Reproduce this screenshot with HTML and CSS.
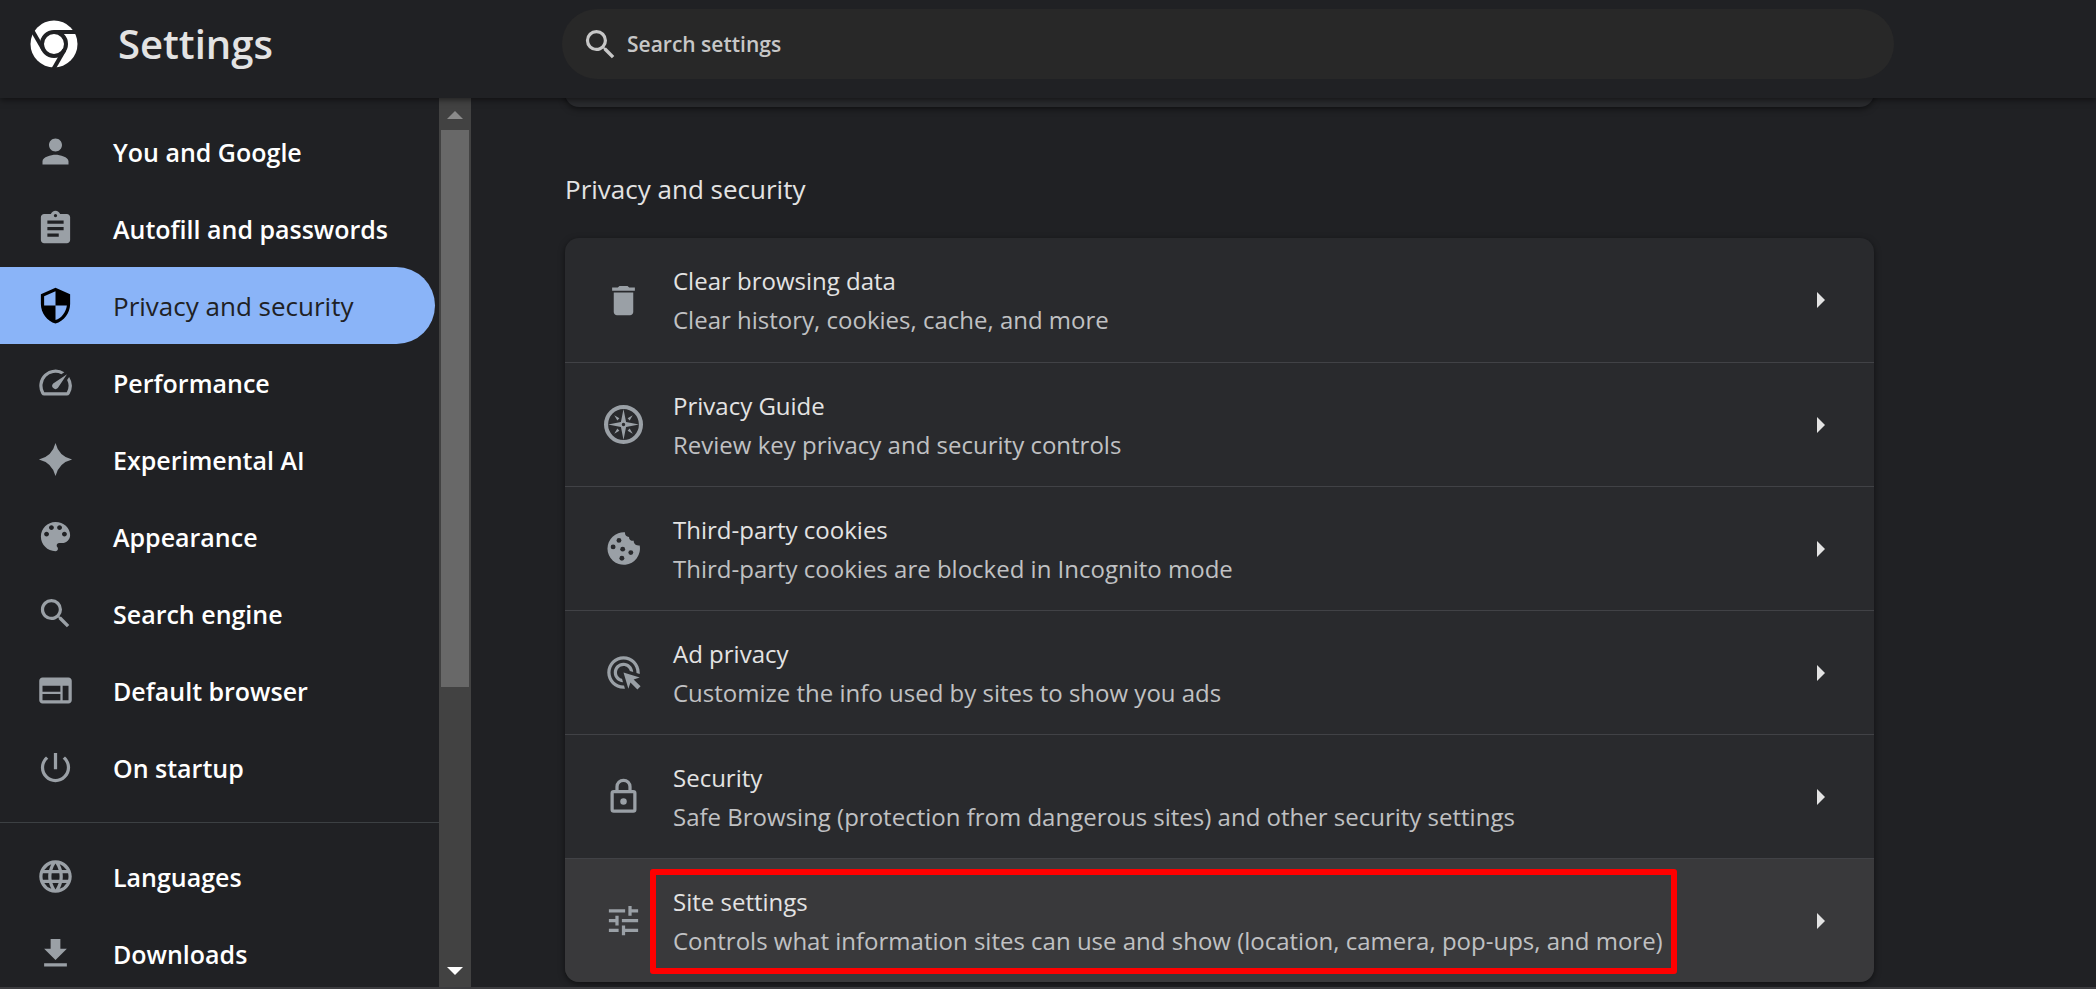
FILE: index.html
```html
<!DOCTYPE html>
<html lang="en">
<head>
    <meta charset="UTF-8">
    <meta name="viewport" content="width=device-width, initial-scale=1.0">
    <title>Settings - Privacy and security</title>
    <link rel="stylesheet" href="styles.css">
</head>
<body>
    <header class="toolbar">
        <div class="brand">
            <svg class="logo" viewBox="0 0 48 48">
                <circle cx="24" cy="24" r="23.5" fill="#fff"/>
                <g fill="none" stroke="#202124" stroke-width="4">
                    <circle cx="24" cy="24" r="12"/>
                    <path d="M24 12h26"/>
                    <path d="M24 12h26" transform="rotate(120 24 24)"/>
                    <path d="M24 12h26" transform="rotate(240 24 24)"/>
                </g>
            </svg>
            <h1>Settings</h1>
        </div>
        <label class="search">
            <svg class="icon" viewBox="0 0 24 24"><path d="M15.5 14h-.79l-.28-.27A6.471 6.471 0 0 0 16 9.5 6.5 6.5 0 1 0 9.5 16c1.61 0 3.09-.59 4.23-1.57l.27.28v.79l5 4.99L20.49 19l-4.99-5zm-6 0C7.01 14 5 11.99 5 9.5S7.01 5 9.5 5 14 7.01 14 9.5 11.99 14 9.5 14z"/></svg>
            <input type="search" placeholder="Search settings" aria-label="Search settings">
        </label>
    </header>

    <div class="container">
        <nav class="sidebar">
            <a href="#people">
                <svg class="icon" viewBox="0 0 24 24"><path d="M12 12c2.21 0 4-1.79 4-4s-1.79-4-4-4-4 1.79-4 4 1.79 4 4 4zm0 2c-2.67 0-8 1.34-8 4v2h16v-2c0-2.66-5.33-4-8-4z"/></svg>
                <span>You and Google</span>
            </a>
            <a href="#autofill">
                <svg class="icon" viewBox="0 0 24 24"><path d="M19 3h-4.18C14.4 1.84 13.3 1 12 1c-1.3 0-2.4.84-2.82 2H5c-1.1 0-2 .9-2 2v14c0 1.1.9 2 2 2h14c1.1 0 2-.9 2-2V5c0-1.1-.9-2-2-2zm-7 0c.55 0 1 .45 1 1s-.45 1-1 1-1-.45-1-1 .45-1 1-1zm2 14H7v-2h7v2zm3-4H7v-2h10v2zm0-4H7V7h10v2z"/></svg>
                <span>Autofill and passwords</span>
            </a>
            <a href="#privacy" class="selected">
                <svg class="icon" viewBox="0 0 24 24"><path d="M12 1L3 5v6c0 5.55 3.84 10.74 9 12 5.16-1.26 9-6.45 9-12V5l-9-4zm0 10.99h7c-.53 4.12-3.28 7.79-7 8.94V12H5V6.3l7-3.11v8.8z"/></svg>
                <span>Privacy and security</span>
            </a>
            <a href="#performance">
                <svg class="icon" viewBox="0 0 24 24"><path d="M20.38 8.57l-1.23 1.85a8 8 0 0 1-.22 7.58H5.07A8 8 0 0 1 15.58 6.85l1.85-1.23A10 10 0 0 0 3.35 19a2 2 0 0 0 1.72 1h13.85a2 2 0 0 0 1.74-1 10 10 0 0 0-.27-10.44zm-9.79 6.84a2 2 0 0 0 2.83 0l5.66-8.49-8.49 5.66a2 2 0 0 0 0 2.83z"/></svg>
                <span>Performance</span>
            </a>
            <a href="#ai">
                <svg class="icon" viewBox="0 0 24 24"><path d="M12 1.8Q14 10 22.2 12 14 14 12 22.2 10 14 1.8 12 10 10 12 1.8z"/></svg>
                <span>Experimental AI</span>
            </a>
            <a href="#appearance">
                <svg class="icon" viewBox="0 0 24 24"><path d="M12 3c-4.97 0-9 4.03-9 9s4.03 9 9 9c.83 0 1.5-.67 1.5-1.5 0-.39-.15-.74-.39-1.01-.23-.26-.38-.61-.38-.99 0-.83.67-1.5 1.5-1.5H16c2.76 0 5-2.24 5-5 0-4.42-4.03-8-9-8zm-5.5 9c-.83 0-1.5-.67-1.5-1.5S5.67 9 6.5 9 8 9.67 8 10.5 7.33 12 6.5 12zm3-4C8.67 8 8 7.33 8 6.5S8.67 5 9.5 5s1.5.67 1.5 1.5S10.33 8 9.5 8zm5 0c-.83 0-1.5-.67-1.5-1.5S13.67 5 14.5 5s1.5.67 1.5 1.5S15.33 8 14.5 8zm3 4c-.83 0-1.5-.67-1.5-1.5S16.67 9 17.5 9s1.5.67 1.5 1.5-.67 1.5-1.5 1.5z"/></svg>
                <span>Appearance</span>
            </a>
            <a href="#search">
                <svg class="icon" viewBox="0 0 24 24"><path d="M15.5 14h-.79l-.28-.27A6.471 6.471 0 0 0 16 9.5 6.5 6.5 0 1 0 9.5 16c1.61 0 3.09-.59 4.23-1.57l.27.28v.79l5 4.99L20.49 19l-4.99-5zm-6 0C7.01 14 5 11.99 5 9.5S7.01 5 9.5 5 14 7.01 14 9.5 11.99 14 9.5 14z"/></svg>
                <span>Search engine</span>
            </a>
            <a href="#default-browser">
                <svg class="icon" viewBox="0 0 24 24"><path fill-rule="evenodd" d="M20 4H4c-1.1 0-2 .9-2 2v12c0 1.1.9 2 2 2h16c1.1 0 2-.9 2-2V6c0-1.1-.9-2-2-2zM4 9h11v3.800H4zM4 14.200h11V18H4zM16.400 9H20v9h-3.600z"/></svg>
                <span>Default browser</span>
            </a>
            <a href="#startup">
                <svg class="icon" viewBox="0 0 24 24"><path d="M13 3h-2v10h2V3zm4.830 2.170l-1.420 1.420C17.990 7.860 19 9.810 19 12c0 3.870-3.130 7-7 7s-7-3.130-7-7c0-2.190 1.010-4.140 2.580-5.420L6.170 5.170C4.230 6.820 3 9.260 3 12c0 4.970 4.030 9 9 9s9-4.030 9-9c0-2.740-1.230-5.180-3.170-6.830z"/></svg>
                <span>On startup</span>
            </a>
            <hr>
            <a href="#languages">
                <svg class="icon" viewBox="0 0 24 24"><path d="M11.990 2C6.470 2 2 6.480 2 12s4.470 10 9.990 10C17.520 22 22 17.520 22 12S17.520 2 11.990 2zm6.930 6h-2.950a15.650 15.650 0 0 0-1.380-3.560A8.030 8.030 0 0 1 18.920 8zM12 4.040c.83 1.200 1.480 2.530 1.910 3.960h-3.820c.43-1.430 1.080-2.760 1.910-3.960zM4.260 14C4.100 13.360 4 12.690 4 12s.1-1.360.26-2h3.380c-.08.66-.14 1.320-.14 2s.06 1.340.14 2H4.260zm.82 2h2.950c.32 1.250.78 2.450 1.380 3.560A7.987 7.987 0 0 1 5.080 16zm2.950-8H5.080a7.987 7.987 0 0 1 4.330-3.560A15.650 15.650 0 0 0 8.030 8zM12 19.960c-.83-1.200-1.480-2.530-1.910-3.960h3.820c-.43 1.430-1.080 2.760-1.910 3.960zM14.340 14H9.660c-.09-.66-.16-1.320-.16-2s.07-1.350.16-2h4.680c.09.65.16 1.320.16 2s-.07 1.340-.16 2zm.25 5.560c.6-1.110 1.060-2.310 1.380-3.560h2.950a8.030 8.030 0 0 1-4.330 3.560zM16.360 14c.08-.66.14-1.320.14-2s-.06-1.340-.14-2h3.380c.16.64.26 1.310.26 2s-.1 1.360-.26 2h-3.380z"/></svg>
                <span>Languages</span>
            </a>
            <a href="#downloads">
                <svg class="icon" viewBox="0 0 24 24"><path d="M19 9h-4V3H9v6H5l7 7 7-7zM5 18v2h14v-2H5z"/></svg>
                <span>Downloads</span>
            </a>
        </nav>

        <div class="scrollbar">
            <svg class="scroll-arrow" viewBox="0 0 32 32"><path fill="#8b8b8b" d="M8 21l8-8 8 8z"/></svg>
            <div class="scroll-track"><div class="scroll-thumb"></div></div>
            <svg class="scroll-arrow" viewBox="0 0 32 32"><path fill="#fff" d="M8 12l8 8 8-8z"/></svg>
        </div>

        <main class="content">
            <div class="card previous"></div>
            <h2>Privacy and security</h2>
            <div class="card">
                <a href="#clear" class="row">
                    <svg class="icon" viewBox="0 0 24 24"><path d="M6 19c0 1.1.9 2 2 2h8c1.1 0 2-.9 2-2V7H6v12zM19 4h-3.500l-1-1h-5l-1 1H5v2h14V4z"/></svg>
                    <span class="text">
                        <span class="label">Clear browsing data</span>
                        <span class="sub-label">Clear history, cookies, cache, and more</span>
                    </span>
                    <svg class="arrow" viewBox="0 0 8 16"><path d="M0 0l8 8-8 8z"/></svg>
                </a>
                <a href="#guide" class="row">
                    <svg class="icon" viewBox="0 0 38 38">
                        <circle cx="19" cy="19" r="17" fill="none" stroke="#9aa0a6" stroke-width="4"/>
                        <path fill-rule="evenodd" d="M19 4l2.500 12.500L34 19l-12.500 2.500L19 34l-2.500-12.500L4 19l12.500-2.500zM19 17.300a1.700 1.700 0 1 0 0 3.400 1.700 1.700 0 1 0 0-3.400z"/>
                        <path d="M10 10l5 3-2 2zM28 10l-3 5-2-2zM28 28l-5-3 2-2zM10 28l3-5 2 2z"/>
                    </svg>
                    <span class="text">
                        <span class="label">Privacy Guide</span>
                        <span class="sub-label">Review key privacy and security controls</span>
                    </span>
                    <svg class="arrow" viewBox="0 0 8 16"><path d="M0 0l8 8-8 8z"/></svg>
                </a>
                <a href="#cookies" class="row">
                    <svg class="icon" viewBox="0 0 24 24">
                        <path d="M12.900 2.050A10 10 0 1 0 21.950 10.100c-1.300.3-2.700-.2-3.300-1.300-.4-.7-.4-1-.3-1.600-1.100.2-2-.1-2.500-.8-.4-.5-.5-1-.4-1.500-1.600.1-2.700-1.200-2.550-2.850z"/>
                        <g fill="#292a2d"><circle cx="9.200" cy="7" r="1.500"/><circle cx="5.600" cy="11" r="1.500"/><circle cx="11.500" cy="12.400" r="1.500"/><circle cx="16.500" cy="14.500" r="1.500"/><circle cx="11" cy="18" r="1.500"/></g>
                    </svg>
                    <span class="text">
                        <span class="label">Third-party cookies</span>
                        <span class="sub-label">Third-party cookies are blocked in Incognito mode</span>
                    </span>
                    <svg class="arrow" viewBox="0 0 8 16"><path d="M0 0l8 8-8 8z"/></svg>
                </a>
                <a href="#ads" class="row">
                    <svg class="icon" viewBox="0 0 24 24"><path d="M11.710 17.990C8.530 17.840 6 15.220 6 12c0-3.310 2.690-6 6-6 3.220 0 5.840 2.530 5.990 5.710l-2.100-.63C15.480 9.310 13.890 8 12 8c-2.210 0-4 1.790-4 4 0 1.890 1.310 3.480 3.080 3.890l.63 2.100zM22 12c0 .3-.01.6-.04.9l-1.970-.59C20 12.210 20 12.100 20 12c0-4.420-3.580-8-8-8s-8 3.580-8 8 3.580 8 8 8c.1 0 .21 0 .31-.01l.59 1.970c-.3.03-.6.04-.9.04C6.480 22 2 17.520 2 12S6.480 2 12 2s10 4.480 10 10zm-3.770 4.260L22 15l-10-3 3 10 1.260-3.770 4.270 4.270 1.980-1.980-4.280-4.260z"/></svg>
                    <span class="text">
                        <span class="label">Ad privacy</span>
                        <span class="sub-label">Customize the info used by sites to show you ads</span>
                    </span>
                    <svg class="arrow" viewBox="0 0 8 16"><path d="M0 0l8 8-8 8z"/></svg>
                </a>
                <a href="#security" class="row">
                    <svg class="icon" viewBox="0 0 24 24">
                        <g fill="none" stroke="#9aa0a6" stroke-width="2"><rect x="5" y="9" width="14" height="12" rx="1"/><path d="M8 9V6a4 4 0 0 1 8 0v3"/></g>
                        <circle cx="12" cy="15" r="2"/>
                    </svg>
                    <span class="text">
                        <span class="label">Security</span>
                        <span class="sub-label">Safe Browsing (protection from dangerous sites) and other security settings</span>
                    </span>
                    <svg class="arrow" viewBox="0 0 8 16"><path d="M0 0l8 8-8 8z"/></svg>
                </a>
                <a href="#site-settings" class="row active">
                    <svg class="icon" viewBox="0 0 24 24"><path d="M3 17v2h6v-2H3zM3 5v2h10V5H3zm10 16v-2h8v-2h-8v-2h-2v6h2zM7 9v2H3v2h4v2h2V9H7zm14 4v-2H11v2h10zm-6-4h2V7h4V5h-4V3h-2v6z"/></svg>
                    <span class="text highlight">
                        <span class="label">Site settings</span>
                        <span class="sub-label">Controls what information sites can use and show (location, camera, pop-ups, and more)</span>
                    </span>
                    <svg class="arrow" viewBox="0 0 8 16"><path d="M0 0l8 8-8 8z"/></svg>
                </a>
            </div>
        </main>
    </div>
</body>
</html>
```

FILE: styles.css
```css
* {
    box-sizing: border-box;
}
body {
    margin: 0;
    height: 100vh;
    display: flex;
    flex-direction: column;
    overflow: hidden;
    background-color: #202124;
    border-bottom: 2px solid #3c3c3f;
    color: #e3e3e3;
    font-family: "Open Sans", "Noto Sans", sans-serif;
    font-size: 24px;
}
a {
    color: inherit;
    text-decoration: none;
}
.icon {
    width: 39px;
    height: 39px;
    flex: none;
    fill: #9aa0a6;
}

/* Toolbar */
.toolbar {
    position: relative;
    z-index: 1;
    flex: none;
    display: flex;
    align-items: center;
    height: 98px;
    padding: 0 202px 10px 30px;
    background-color: #202124;
    box-shadow: 0 2px 6px rgba(0,0,0,0.5);
}
.brand {
    flex: none;
    display: flex;
    align-items: center;
    gap: 40px;
    width: 532px;
}
.logo {
    width: 48px;
    height: 48px;
}
h1 {
    margin: 0;
    font-size: 40px;
    font-weight: 600;
    line-height: 48px;
}
.search {
    flex: 1;
    display: flex;
    align-items: center;
    gap: 7px;
    height: 70px;
    padding: 0 19px;
    border-radius: 35px;
    background-color: #282828;
}
.search .icon {
    fill: #c7c7c7;
}
.search input {
    flex: 1;
    padding: 0;
    border: none;
    outline: none;
    background: none;
    color: #c7c7c7;
    font-family: inherit;
    font-size: 21px;
    font-weight: 600;
}
.search input::placeholder {
    color: #c7c7c7;
}

.container {
    flex: 1;
    display: flex;
    min-height: 0;
}

/* Sidebar */
.sidebar {
    flex: none;
    width: 439px;
    padding-top: 15px;
    overflow: hidden;
    color: #fff;
    font-size: 25px;
    font-weight: 600;
}
.sidebar a {
    display: flex;
    align-items: center;
    gap: 38px;
    height: 77px;
    margin-right: 4px;
    padding-left: 36px;
    border-radius: 0 39px 39px 0;
    white-space: nowrap;
}
.sidebar .selected {
    background-color: #8ab4f8;
    color: #202124;
    font-size: 26px;
    font-weight: 400;
}
.sidebar .selected .icon {
    fill: #000;
}
.sidebar hr {
    margin: 16px 0 15px;
    border: none;
    border-top: 1px solid #3c4043;
}

.scrollbar {
    flex: none;
    display: flex;
    flex-direction: column;
    width: 32px;
    background-color: #424242;
}
.scroll-arrow {
    flex: none;
    width: 32px;
    height: 32px;
}
.scroll-track {
    flex: 1;
    padding: 0 2px;
}
.scroll-thumb {
    height: 67.5%;
    background-color: #686868;
}

/* Settings page */
.content {
    flex: 1;
    display: flex;
    flex-direction: column;
    padding: 0 222px 0 94px;
    overflow: hidden;
}
.card {
    flex: none;
    border-radius: 14px;
    background-color: #292a2d;
    box-shadow: 0 2px 6px rgba(0,0,0,0.5);
}
/* End of the section scrolled under the toolbar */
.previous {
    height: 40px;
    margin-top: -31px;
}
h2 {
    margin: 62px 0 29px;
    font-size: 26px;
    font-weight: 400;
    line-height: 40px;
}
.row {
    display: flex;
    align-items: center;
    height: 124px;
    padding: 0 49px 0 39px;
}
.row + .row {
    border-top: 1px solid #414246;
}
.row .text {
    margin-left: 30px;
}
.label, .sub-label {
    display: block;
    line-height: 39px;
    white-space: nowrap;
}
.sub-label {
    color: #c0c1c3;
}
.arrow {
    width: 8px;
    height: 16px;
    margin-left: auto;
    fill: #e3e3e3;
}
.active {
    border-radius: 0 0 14px 14px;
    background-color: #39393b;
}
.highlight {
    position: relative;
}
/* Red marker drawn around the label */
.highlight::after {
    content: "";
    position: absolute;
    inset: -13px -14px -14px -23px;
    border: 6px solid #f00;
    border-radius: 3px;
}
```
